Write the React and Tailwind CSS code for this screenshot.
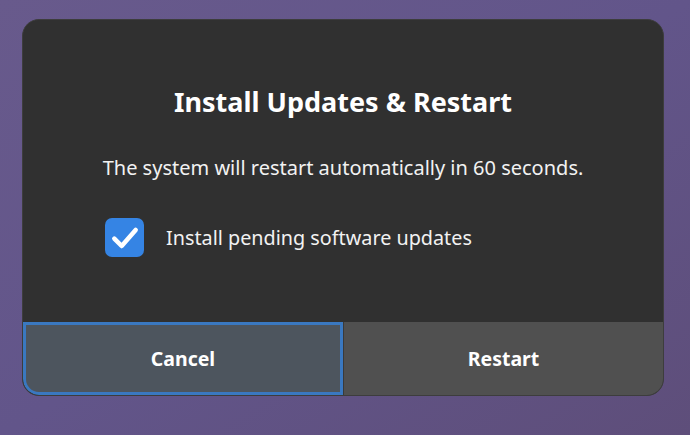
import { useState } from "react";

const FONT = { fontFamily: '"Noto Sans", "Open Sans", sans-serif' };

function CheckMark() {
  return (
    <svg viewBox="0 0 24 24" className="h-[32px] w-[32px]" fill="none">
      <path
        d="M4 12.5 L9.5 18 L20 6"
        stroke="white"
        strokeWidth="3.4"
        strokeLinecap="round"
        strokeLinejoin="round"
      />
    </svg>
  );
}

export default function App() {
  const [checked, setChecked] = useState(true);

  return (
    <div
      className="h-[435px] w-[690px] overflow-hidden bg-gradient-to-br from-[#685a8c] via-[#62558a] to-[#5e4e7a] pl-[22px] pt-[19px]"
      style={FONT}
    >
      <div className="flex h-[377px] w-[642px] flex-col overflow-hidden rounded-[17px] border border-[#3d3d3d] bg-[#303030] text-white">
        {/* contenu */}
        <div className="flex flex-1 flex-col items-center pt-[66px]">
          <h1 className="text-[27px] font-bold leading-[32px]">Install Updates &amp; Restart</h1>
          <p className="mt-[37px] text-[20px] leading-[26px] text-[#f2f2f2]">
            The system will restart automatically in 60 seconds.
          </p>
          <label className="mt-[37px] flex w-full cursor-pointer items-center gap-[22px] pl-[82px]">
            <button
              type="button"
              onClick={() => setChecked(!checked)}
              className="flex h-[39px] w-[39px] items-center justify-center rounded-[7px] bg-[#3584e4]"
            >
              {checked && <CheckMark />}
            </button>
            <span className="text-[19.8px] text-[#f2f2f2]">Install pending software updates</span>
          </label>
        </div>

        {/* boutons */}
        <div className="flex h-[73px]">
          <button className="w-[320px] rounded-bl-[16px] border-[3px] border-[#3a78c0] bg-[#4d555e] text-[19.5px] font-bold">
            Cancel
          </button>
          <button className="flex-1 border-l border-[#3a3a3a] bg-[#505050] text-[19.5px] font-bold">
            Restart
          </button>
        </div>
      </div>
    </div>
  );
}
